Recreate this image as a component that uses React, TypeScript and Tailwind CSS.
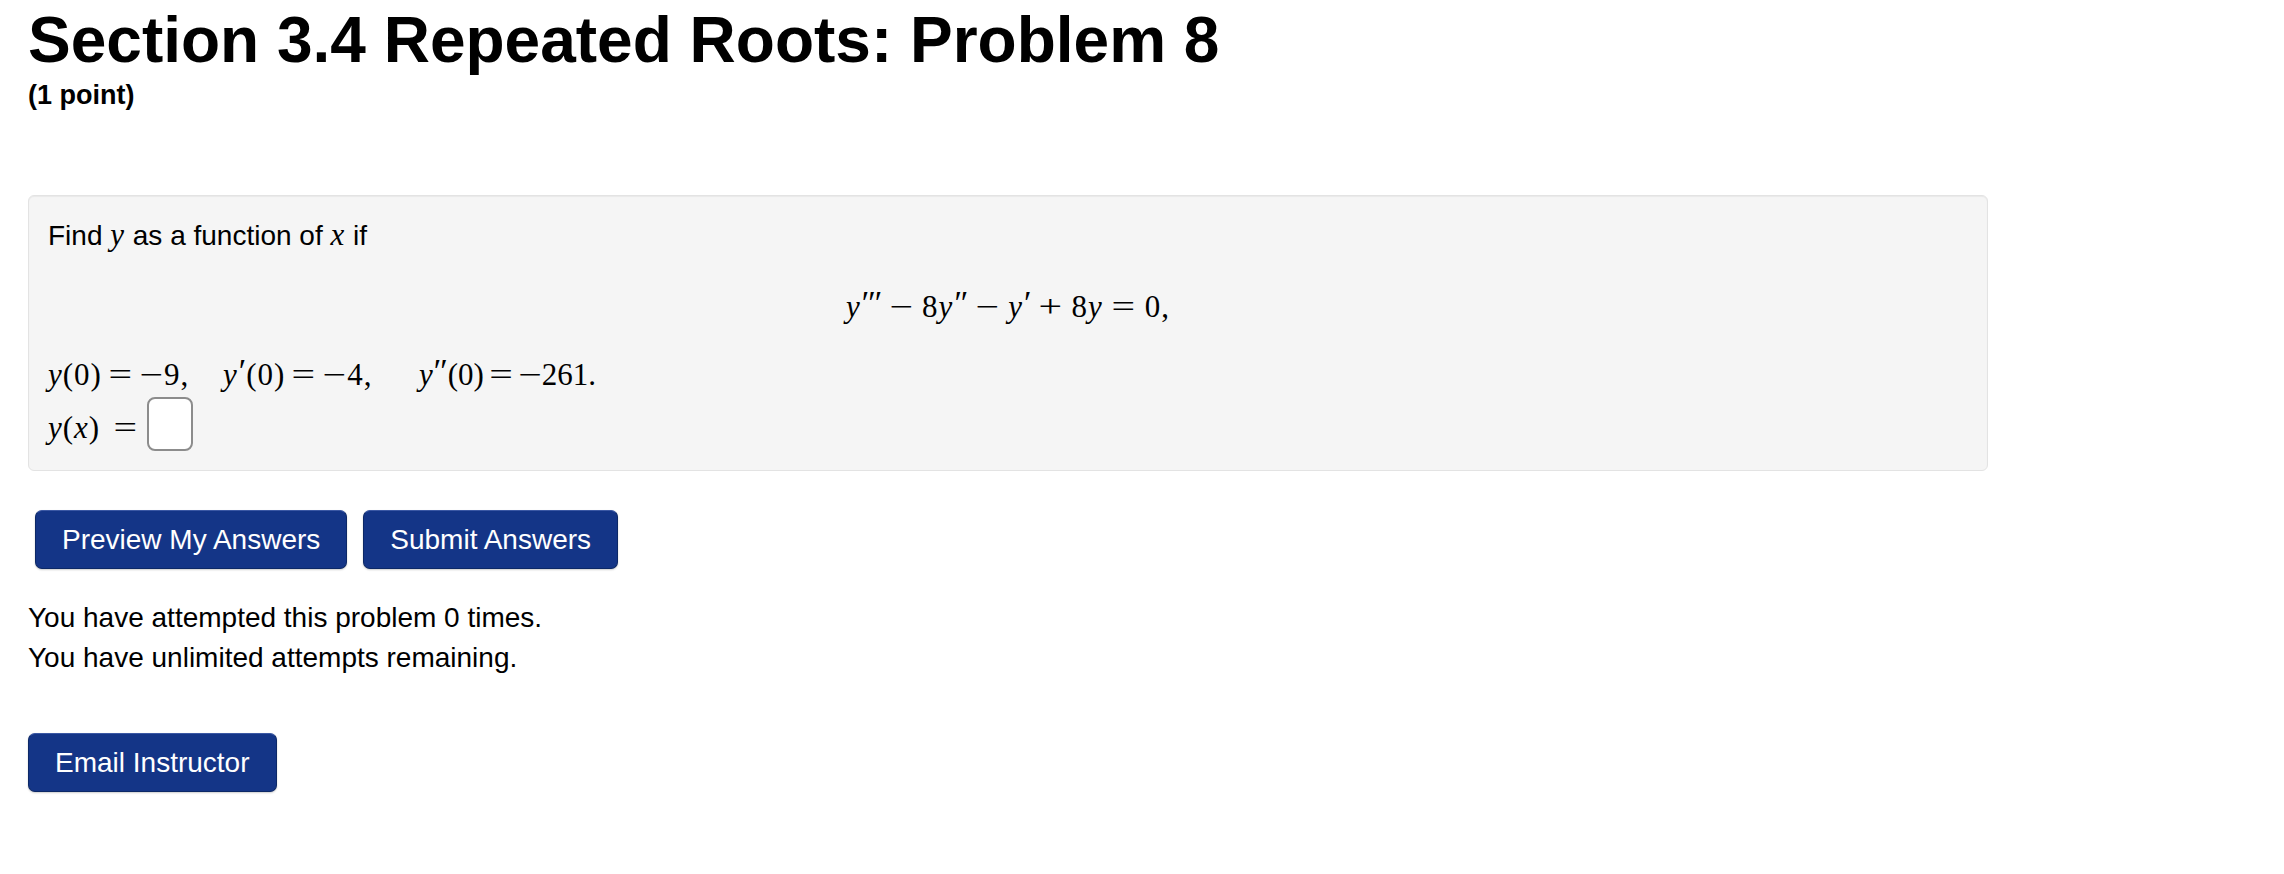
import React from "react";

function V({ children }: { children: React.ReactNode }) {
  return <span className="italic">{children}</span>;
}

function P({ n }: { n: number }) {
  return (
    <span className="not-italic inline-block align-top leading-[40px] text-[34px] tracking-[-1px] ml-[1px] mr-[1px] relative top-[-4px]">
      {"′".repeat(n)}
    </span>
  );
}

function Op({ c }: { c: string }) {
  return (
    <span className="inline-block w-[24px] text-center scale-x-[1.35]">{c}</span>
  );
}

function Bin({ c }: { c: string }) {
  return (
    <span className="mx-[8px]">
      <Op c={c} />
    </span>
  );
}

function Rel({ c, tight }: { c: string; tight?: boolean }) {
  return (
    <span className={tight ? "mx-[7px]" : "mx-[9px]"}>
      <Op c={c} />
    </span>
  );
}

const math = "font-['Liberation_Serif','Times_New_Roman',serif] text-[31px] tracking-[1px]";

const btn =
  "h-[59px] px-[26px] rounded-[7px] border border-[#0c2866] border-t-[#3b58a4] bg-[#143587] text-white text-[28px] leading-[40px] shadow-[0_1px_2px_rgba(0,0,0,0.2)]";

export default function App() {
  return (
    <div className="min-h-screen bg-white text-black font-['Liberation_Sans',Arial,Helvetica,sans-serif] pl-[28px]">
      <h1 className="pt-[4px] text-[64px] leading-[72px] font-bold">
        Section 3.4 Repeated Roots: Problem 8
      </h1>
      <div className="mt-[3px] text-[27px] leading-[32px] font-bold">(1 point)</div>

      <div className="mt-[84px] w-[1960px] rounded-[6px] border border-[#e3e3e3] bg-[#f5f5f5] shadow-[inset_0_1px_1px_rgba(0,0,0,0.05)] p-[19px] text-[28px] leading-[40px]">
        <div>
          Find <span className={math}><V>y</V></span> as a function of{" "}
          <span className={math}><V>x</V></span> if
        </div>

        <div className={`mt-[31px] text-center leading-[40px] ${math}`}>
          <V>y</V>
          <P n={3} />
          <Bin c="−" />
          8<V>y</V>
          <P n={2} />
          <Bin c="−" />
          <V>y</V>
          <P n={1} />
          <Bin c="+" />
          8<V>y</V>
          <Rel c="=" />
          0,
        </div>

        <div className={`mt-[28px] leading-[40px] ${math}`}>
          <span className="inline-block w-[175px]">
            <V>y</V>(0)<Rel c="=" tight />
            <Op c="−" />9,
          </span>
          <span className="inline-block w-[196px]">
            <V>y</V>
            <P n={1} />
            (0)<Rel c="=" tight />
            <Op c="−" />4,
          </span>
          <span className="inline-block tracking-[0px]">
            <V>y</V>
            <P n={2} />
            (0)<span className="mx-[5px]"><Op c="=" /></span>
            <Op c="−" />261.
          </span>
        </div>

        <div className="mt-[2px] flex items-end">
          <span className={`leading-[40px] mb-[3px] ${math}`}>
            <V>y</V>(<V>x</V>)<span className="ml-[14px] mr-[9px]"><Op c="=" /></span>
          </span>
          <input
            type="text"
            aria-label="answer"
            className="h-[54px] w-[46px] rounded-[8px] border-2 border-[#8c8c8c] bg-white outline-none"
          />
        </div>
      </div>

      <div className="mt-[39px] flex gap-[16px] pl-[7px]">
        <button className={btn}>Preview My Answers</button>
        <button className={btn}>Submit Answers</button>
      </div>

      <div className="mt-[29px] text-[28px] leading-[40px]">
        <div>You have attempted this problem 0 times.</div>
        <div>You have unlimited attempts remaining.</div>
      </div>

      <div className="mt-[55px]">
        <button className={btn}>Email Instructor</button>
      </div>
    </div>
  );
}
